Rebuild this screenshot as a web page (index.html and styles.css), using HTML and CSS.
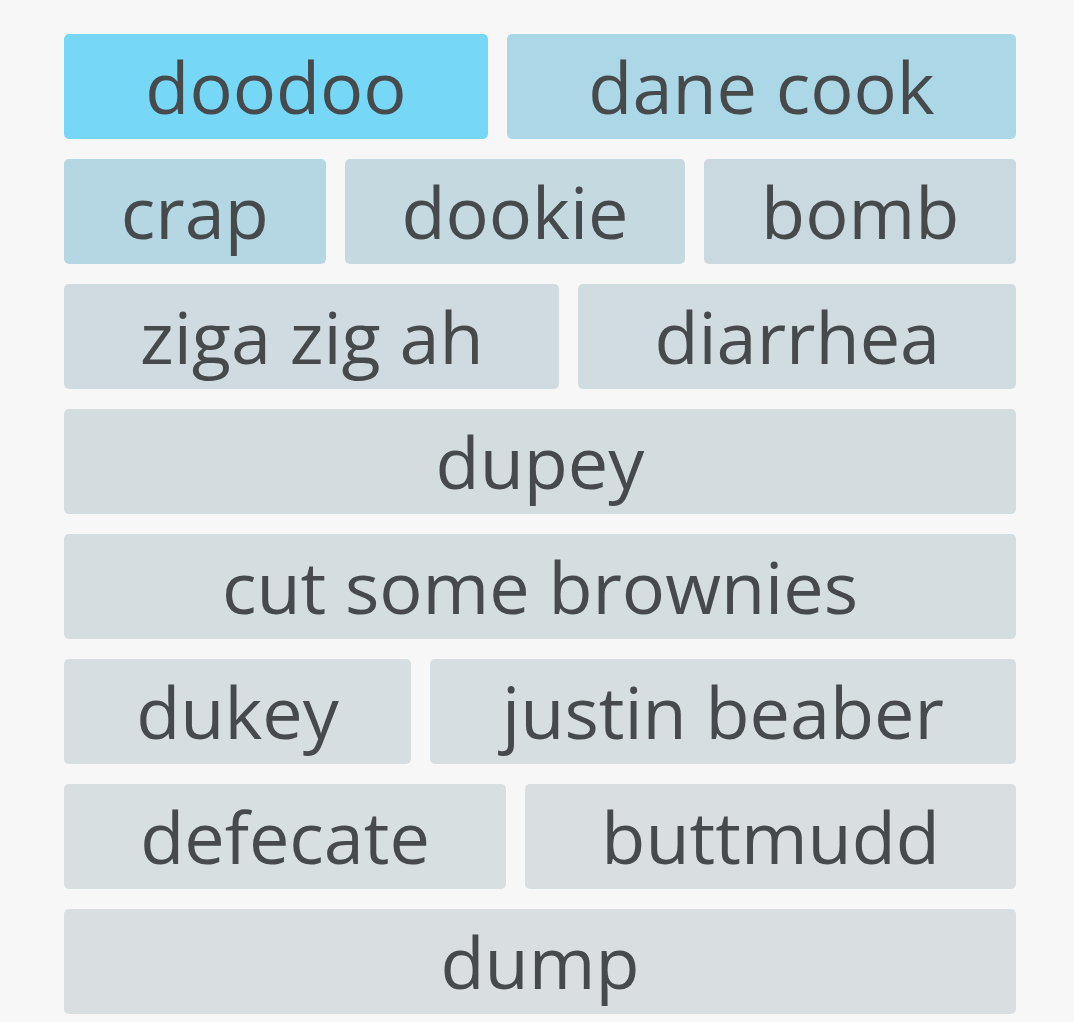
FILE: index.html
```html
<!DOCTYPE html>
<html lang="en">
<head>
    <meta charset="UTF-8">
    <meta name="viewport" content="width=device-width, initial-scale=1.0">
    <title>Tag Cloud</title>
    <link rel="stylesheet" href="styles.css">
</head>
<body>
    <!-- Tag list, ordered by votes -->
    <div class="tags">
        <div class="tag rank-1">doodoo</div>
        <div class="tag rank-2">dane cook</div>
        <div class="tag rank-3">crap</div>
        <div class="tag rank-4">dookie</div>
        <div class="tag rank-5">bomb</div>
        <div class="tag rank-6">ziga zig ah</div>
        <div class="tag rank-7">diarrhea</div>
        <div class="tag rank-8">dupey</div>
        <div class="tag rank-9">cut some brownies</div>
        <div class="tag rank-10">dukey</div>
        <div class="tag rank-11">justin beaber</div>
        <div class="tag rank-12">defecate</div>
        <div class="tag rank-13">buttmudd</div>
        <div class="tag rank-14">dump</div>
    </div>
</body>
</html>
```

FILE: styles.css
```css
body {
    font-family: "Open Sans", "Noto Sans", sans-serif;
    margin: 0;
    padding: 0;
    background-color: #f7f7f7;
    color: #464a4c;
}

/* Tag list */
.tags {
    width: 952px;
    margin: 34px 0 0 64px;
    display: flex;
    flex-wrap: wrap;
    gap: 20px 19px;
}
.tag {
    flex-grow: 1;
    height: 105px;
    line-height: 105px;
    padding: 0 40px;
    font-size: 72px;
    text-align: center;
    white-space: nowrap;
    border-radius: 5px;
    background-color: #d9dfe1;
}

/* Shades by rank */
.rank-1 { background-color: #77d7f6; }
.rank-2 { background-color: #acd7e6; }
.rank-3 { background-color: #b4d7e3; }
.rank-4 { background-color: #c5d9e0; }
.rank-5 { background-color: #c9d9df; }
.rank-6 { background-color: #cfdbe0; }
.rank-7 { background-color: #d1dce0; }
.rank-8 { background-color: #d3dde0; }
.rank-9 { background-color: #d4dde0; }
.rank-10 { background-color: #d6dee1; }
.rank-11 { background-color: #d7dee1; }
.rank-12 { background-color: #d8dfe1; }
.rank-13 { background-color: #d9dfe1; }
.rank-14 { background-color: #d9dfe1; }
```
